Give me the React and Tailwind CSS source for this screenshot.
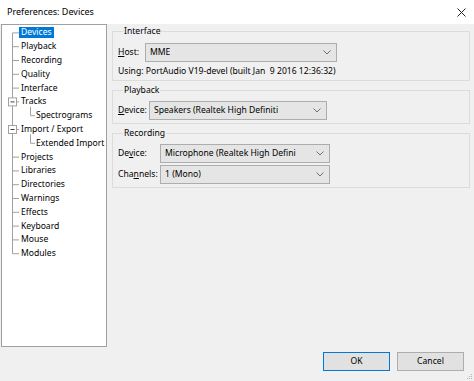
import { Fragment } from 'react'

const items = [
  { label: 'Devices', level: 1, selected: true },
  { label: 'Playback', level: 1 },
  { label: 'Recording', level: 1 },
  { label: 'Quality', level: 1 },
  { label: 'Interface', level: 1 },
  { label: 'Tracks', level: 1, open: true },
  { label: 'Spectrograms', level: 2 },
  { label: 'Import / Export', level: 1, open: true },
  { label: 'Extended Import', level: 2 },
  { label: 'Projects', level: 1 },
  { label: 'Libraries', level: 1 },
  { label: 'Directories', level: 1 },
  { label: 'Warnings', level: 1 },
  { label: 'Effects', level: 1 },
  { label: 'Keyboard', level: 1 },
  { label: 'Mouse', level: 1 },
  { label: 'Modules', level: 1 },
]

const ROW = 13.8
const TOP = 1
const mid = (i) => TOP + ROW * i + ROW / 2

function TreeLines() {
  const last = items.length - 1
  return (
    <svg className="absolute left-0 top-0 pointer-events-none" width="104" height="321">
      <line x1="10.5" y1={mid(0)} x2="10.5" y2={mid(last)} stroke="#a0a0a0" />
      {items.map((it, i) =>
        it.level === 1 ? (
          <Fragment key={i}>
            <line x1="10.5" y1={mid(i)} x2="17" y2={mid(i)} stroke="#a0a0a0" />
            {it.open && (
              <>
                <rect x="6.5" y={mid(i) - 4} width="8" height="8" fill="#fff" stroke="#a0a0a0" />
                <line x1="8.5" y1={mid(i)} x2="12.5" y2={mid(i)} stroke="#404040" />
              </>
            )}
          </Fragment>
        ) : (
          <Fragment key={i}>
            <line x1="28.5" y1={mid(i - 1) + 5} x2="28.5" y2={mid(i)} stroke="#a0a0a0" />
            <line x1="28.5" y1={mid(i)} x2="33" y2={mid(i)} stroke="#a0a0a0" />
          </Fragment>
        )
      )}
    </svg>
  )
}

function Tree() {
  return (
    <div className="relative ml-[1px] w-[106px] h-[323px] bg-white border border-[#a0a0a0]">
      <TreeLines />
      <div className="flex flex-col pt-[1px]">
        {items.map((it) => (
          <div
            key={it.label}
            className={`h-[13.8px] flex items-center whitespace-nowrap ${it.level === 1 ? 'pl-[17px]' : 'pl-[32px]'}`}
          >
            <span className={`px-[2px] leading-[11px] ${it.selected ? 'bg-[#0078d7] text-white' : ''}`}>{it.label}</span>
          </div>
        ))}
      </div>
    </div>
  )
}

function Chevron() {
  return (
    <svg width="8" height="5" viewBox="0 0 8 5" className="shrink-0">
      <path d="M0.5 0.5 L4 4 L7.5 0.5" fill="none" stroke="#707070" strokeWidth="1" />
    </svg>
  )
}

function Select({ value, w }) {
  return (
    <div className={`${w} h-[19px] flex items-center justify-between pl-[4px] pr-[5px] bg-[#e5e5e5] border border-[#adadad]`}>
      <span className="truncate">{value}</span>
      <Chevron />
    </div>
  )
}

function Group({ title, children }) {
  return (
    <fieldset className="w-[358px] border border-[#dcdcdc] pl-[5px] pb-[3px]">
      <legend className="ml-[5px] px-[1px] leading-[12px]">{title}</legend>
      {children}
    </fieldset>
  )
}

function Button({ children, primary }) {
  return (
    <button
      className={`w-[67px] h-[19px] bg-[#e1e1e1] border ${primary ? 'border-[#0078d7]' : 'border-[#adadad]'}`}
    >
      {children}
    </button>
  )
}

export default function App() {
  return (
    <div className="w-[474px] h-[381px] flex flex-col bg-[#f0f0f0] text-black text-[8.6px] font-['Noto_Sans',sans-serif] overflow-hidden">
      <div className="h-6 shrink-0 bg-white flex items-center justify-between pl-[7px] pr-[8px]">
        <span className="text-[9px]">Preferences: Devices</span>
        <svg width="9" height="9" viewBox="0 0 9 9">
          <path d="M0.5 0.5 L8.5 8.5 M8.5 0.5 L0.5 8.5" stroke="#222" strokeWidth="1" />
        </svg>
      </div>

      <div className="flex h-[323px] shrink-0">
        <Tree />
        <div className="ml-[5px] pt-[1px] flex flex-col gap-[3px]">
          <Group title="Interface">
            <div className="mt-[6px] flex items-center">
              <span className="w-[27px]"><u>H</u>ost:</span>
              <Select value="MME" w="w-[192px]" />
            </div>
            <div className="mt-[3px] leading-[12px] whitespace-pre">Using: PortAudio V19-devel (built Jan  9 2016 12:36:32)</div>
          </Group>
          <Group title="Playback">
            <div className="mt-[5px] flex items-center">
              <span className="w-[31px]"><u>D</u>evice:</span>
              <Select value="Speakers (Realtek High Definiti" w="w-[178px]" />
            </div>
          </Group>
          <Group title="Recording">
            <div className="mt-[5px] flex items-center">
              <span className="w-[42px]">De<u>v</u>ice:</span>
              <Select value="Microphone (Realtek High Defini" w="w-[170px]" />
            </div>
            <div className="mt-[2px] flex items-center">
              <span className="w-[42px]">Cha<u>n</u>nels:</span>
              <Select value="1 (Mono)" w="w-[170px]" />
            </div>
          </Group>
        </div>
      </div>

      <div className="flex-1 flex items-start justify-end gap-[7px] pt-[5px] pr-[10px] relative">
        <Button primary>OK</Button>
        <Button>Cancel</Button>
        <svg className="absolute right-[1px] bottom-[1px]" width="6" height="6" viewBox="0 0 6 6">
          <rect x="4" y="0" width="1" height="1" fill="#b0b0b0" />
          <rect x="2" y="2" width="1" height="1" fill="#b0b0b0" />
          <rect x="4" y="2" width="1" height="1" fill="#b0b0b0" />
          <rect x="0" y="4" width="1" height="1" fill="#b0b0b0" />
          <rect x="2" y="4" width="1" height="1" fill="#b0b0b0" />
          <rect x="4" y="4" width="1" height="1" fill="#b0b0b0" />
        </svg>
      </div>
    </div>
  )
}
